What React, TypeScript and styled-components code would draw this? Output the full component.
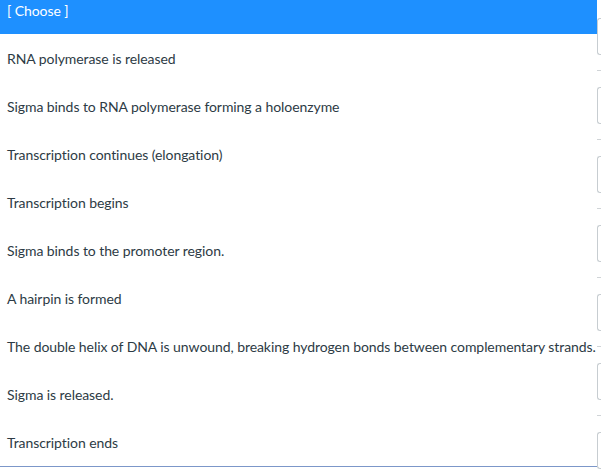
import styled, { createGlobalStyle } from "styled-components";

const GlobalStyle = createGlobalStyle`
  html, body {
    margin: 0;
    padding: 0;
    background: #ffffff;
  }
  body {
    font-family: Lato, "Open Sans", sans-serif;
    overflow: hidden;
  }
`;

// #region Style

const Page = styled.div`
  display: flex;
  width: 601px;
  height: 469px;
  overflow: hidden;
`;

const Listbox = styled.div`
  width: 597px;
  height: 466px;
  overflow: hidden;
  border-bottom: 1px solid #7c97c9;
  flex-shrink: 0;
`;

const Options = styled.ul`
  list-style: none;
  margin: -14px 0 0;
  padding: 0;
`;

const Option = styled.li<{ $active?: boolean }>`
  display: flex;
  align-items: center;
  height: 48px;
  padding: 0 7px;
  font-size: 14px;
  letter-spacing: -0.07px;
  white-space: nowrap;
  color: ${(p) => (p.$active ? "#ffffff" : "#2d3b45")};
  background: ${(p) => (p.$active ? "#1e90ff" : "#ffffff")};
`;

const Backdrop = styled.div`
  display: flex;
  flex-direction: column;
  padding-top: 18px;
  width: 4px;
`;

const FieldEdge = styled.div`
  height: 35px;
  border: 1px solid #c7cdd1;
  border-right: none;
  border-radius: 3px 0 0 3px;
`;

const Rule = styled.div`
  height: 1px;
  margin: 15px 0 16px;
  background: #d0d4d7;
`;

// #endregion

const items = [
  "RNA polymerase is released",
  "Sigma binds to RNA polymerase forming a holoenzyme",
  "Transcription continues (elongation)",
  "Transcription begins",
  "Sigma binds to the promoter region.",
  "A hairpin is formed",
  "The double helix of DNA is unwound, breaking hydrogen bonds between complementary strands.",
  "Sigma is released.",
  "Transcription ends",
];

export default function App() {
  return (
    <>
      <GlobalStyle />
      <Page>
        <Listbox role="listbox">
          <Options>
            <Option $active>[ Choose ]</Option>
            {items.map((item) => (
              <Option key={item}>{item}</Option>
            ))}
          </Options>
        </Listbox>
        <Backdrop>
          {Array.from({ length: 7 }).map((_, i) => (
            <div key={i}>
              <FieldEdge />
              <Rule />
            </div>
          ))}
        </Backdrop>
      </Page>
    </>
  );
}
